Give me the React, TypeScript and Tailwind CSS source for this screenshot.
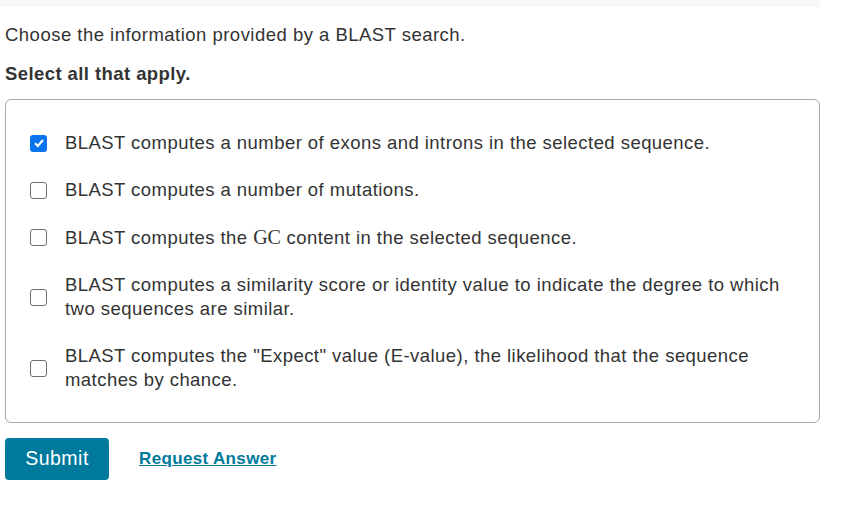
import { useState } from "react";

const options = [
  { id: 1, text: <>BLAST computes a number of exons and introns in the selected sequence.</> },
  { id: 2, text: <>BLAST computes a number of mutations.</> },
  {
    id: 3,
    text: (
      <>
        BLAST computes the{" "}
        <span className="font-['Liberation_Serif',serif] text-[20px] tracking-normal">GC</span> content in the selected
        sequence.
      </>
    ),
  },
  {
    id: 4,
    text: <>BLAST computes a similarity score or identity value to indicate the degree to which two sequences are similar.</>,
  },
  {
    id: 5,
    text: <>BLAST computes the "Expect" value (E-value), the likelihood that the sequence matches by chance.</>,
  },
];

function Check({ checked }: { checked: boolean }) {
  if (checked) {
    return (
      <span className="w-[17px] h-[17px] shrink-0 rounded-[3px] bg-[#0b75f0] flex items-center justify-center">
        <svg width="12" height="12" viewBox="0 0 12 12">
          <path d="M2 6.2 L4.8 9 L10 3" fill="none" stroke="white" strokeWidth="2.2" />
        </svg>
      </span>
    );
  }
  return <span className="w-[17px] h-[17px] shrink-0 rounded-[3px] border-[1.5px] border-[#6e6e6e] bg-white" />;
}

export default function App() {
  const [selected, setSelected] = useState<number[]>([1]);

  const toggle = (id: number) =>
    setSelected(s => (s.includes(id) ? s.filter(x => x !== id) : [...s, id]));

  return (
    <div className="w-[853px] h-[520px] bg-white font-['Liberation_Sans',Arial,sans-serif] text-[#333]">
      <div className="w-[820px] h-[7px] bg-[#f7f7f7]" />
      <div className="pl-[5px] w-[820px]">
        <p className="text-[18.5px] leading-6 tracking-[0.48px] mt-[16px]">Choose the information provided by a BLAST search.</p>
        <p className="text-[18.5px] leading-6 tracking-[0.42px] font-bold mt-[15px]">Select all that apply.</p>

        <div className="mt-[13px] border border-[#a9a9a9] rounded-[6px] pt-[31px] pb-[30px] pl-[24px] pr-[30px] flex flex-col gap-[23px]">
          {options.map(o => (
            <label key={o.id} onClick={() => toggle(o.id)} className="flex items-center gap-[18px] cursor-pointer">
              <Check checked={selected.includes(o.id)} />
              <span className="text-[18.5px] leading-6 tracking-[0.45px] max-w-[722px]">{o.text}</span>
            </label>
          ))}
        </div>

        <div className="mt-[15px] flex items-center gap-[30px]">
          <button className="w-[104px] h-[42px] rounded-[4px] bg-[#007a9c] text-white text-[19.5px] tracking-[0.5px]">Submit</button>
          <a className="text-[#007a9c] font-bold underline text-[17px] tracking-[0.35px]">Request Answer</a>
        </div>
      </div>
    </div>
  );
}
